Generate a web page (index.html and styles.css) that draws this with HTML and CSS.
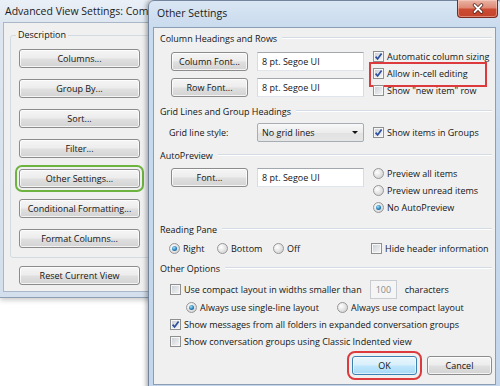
FILE: index.html
```html
<!DOCTYPE html>
<html>
<head>
<meta charset="utf-8">
<title>Other Settings</title>
<link rel="stylesheet" href="styles.css">
</head>
<body>
<div class="win back">
  <div class="btitle"><span class="title-text">Advanced View Settings: Compact</span></div>
  <div class="bclient">
    <div class="group">
      <span class="legend">Description</span>
      <div class="btnstack">
        <button class="btn">Columns...</button>
        <button class="btn">Group By...</button>
        <button class="btn">Sort...</button>
        <button class="btn">Filter...</button>
        <button class="btn hl-green">Other Settings...</button>
        <button class="btn">Conditional Formatting...</button>
        <button class="btn">Format Columns...</button>
      </div>
    </div>
    <button class="btn reset">Reset Current View</button>
  </div>
</div>

<div class="win dialog">
  <div class="dtitle">
    <span class="title-text">Other Settings</span>
    <span class="close"><svg width="14" height="11" viewBox="0 0 14 11"><path d="M3.5 2 L10.5 9 M10.5 2 L3.5 9" stroke="#4a1c14" stroke-width="3.4" stroke-linecap="round"/><path d="M3.5 2 L10.5 9 M10.5 2 L3.5 9" stroke="#fff" stroke-width="1.9" stroke-linecap="round"/></svg></span>
  </div>
  <div class="dclient">
    <div class="head"><span>Column Headings and Rows</span></div>
    <div class="body b-top">
      <div class="left stack">
        <div class="pair"><button class="btn">Column Font...</button><div class="field">8 pt. Segoe UI</div></div>
        <div class="pair"><button class="btn">Row Font...</button><div class="field">8 pt. Segoe UI</div></div>
      </div>
      <div class="right opts">
        <div class="opt"><span class="cb on"><svg viewBox="0 0 9 9"><path d="M1.6 4.6 L3.6 7 L7.6 1.6" stroke="#2c4f9e" stroke-width="1.7" fill="none"/></svg></span><span>Automatic column sizing</span></div>
        <div class="opt mark-red"><span class="cb on"><svg viewBox="0 0 9 9"><path d="M1.6 4.6 L3.6 7 L7.6 1.6" stroke="#2c4f9e" stroke-width="1.7" fill="none"/></svg></span><span>Allow in-cell editing</span></div>
        <div class="opt"><span class="cb"></span><span>Show "new item" row</span></div>
      </div>
    </div>

    <div class="head h2"><span>Grid Lines and Group Headings</span></div>
    <div class="body b-grid">
      <div class="left pair">
        <span class="lbl">Grid line style:</span>
        <div class="select"><span>No grid lines</span><span class="arrow"></span></div>
      </div>
      <div class="right">
        <div class="opt"><span class="cb on"><svg viewBox="0 0 9 9"><path d="M1.6 4.6 L3.6 7 L7.6 1.6" stroke="#2c4f9e" stroke-width="1.7" fill="none"/></svg></span><span>Show items in Groups</span></div>
      </div>
    </div>

    <div class="head h3"><span>AutoPreview</span></div>
    <div class="body b-top b-ap">
      <div class="left stack">
        <div class="pair"><button class="btn">Font...</button><div class="field">8 pt. Segoe UI</div></div>
      </div>
      <div class="right opts">
        <div class="opt"><span class="rb"></span><span>Preview all items</span></div>
        <div class="opt"><span class="rb"></span><span>Preview unread items</span></div>
        <div class="opt"><span class="rb on"></span><span>No AutoPreview</span></div>
      </div>
    </div>

    <div class="head h4"><span>Reading Pane</span></div>
    <div class="body b-rp">
      <div class="left radios">
        <div class="opt w-right"><span class="rb on"></span><span>Right</span></div>
        <div class="opt w-bottom"><span class="rb"></span><span>Bottom</span></div>
        <div class="opt"><span class="rb"></span><span>Off</span></div>
      </div>
      <div class="right">
        <div class="opt"><span class="cb"></span><span>Hide header information</span></div>
      </div>
    </div>

    <div class="head h5"><span>Other Options</span></div>
    <div class="other">
      <div class="opt row-compact"><span class="cb"></span><span>Use compact layout in widths smaller than</span><span class="field small">100</span><span>characters</span></div>
      <div class="row-layout">
        <div class="opt w-single"><span class="rb on"></span><span>Always use single-line layout</span></div>
        <div class="opt"><span class="rb"></span><span>Always use compact layout</span></div>
      </div>
      <div class="opt"><span class="cb on"><svg viewBox="0 0 9 9"><path d="M1.6 4.6 L3.6 7 L7.6 1.6" stroke="#2c4f9e" stroke-width="1.7" fill="none"/></svg></span><span>Show messages from all folders in expanded conversation groups</span></div>
      <div class="opt"><span class="cb"></span><span>Show conversation groups using Classic Indented view</span></div>
    </div>

    <div class="actions">
      <button class="btn dlg default hl-red">OK</button>
      <button class="btn dlg">Cancel</button>
    </div>
  </div>
</div>
</body>
</html>
```

FILE: styles.css
```css
* { box-sizing: border-box; }
html, body { margin: 0; padding: 0; }
body {
  width: 500px;
  height: 386px;
  overflow: hidden;
  position: relative;
  background: #ffffff;
  font-family: "Open Sans", "Noto Sans", sans-serif;
  font-size: 9px;
  color: #141414;
}

.win { position: absolute; display: flex; flex-direction: column; }

/* ---------- background window ---------- */
.back {
  left: 0;
  top: 0;
  width: 190px;
  height: 298px;
  background: linear-gradient(#eaf0f7, #dde6f0 24px, #d3dfec);
  border-bottom: 1px solid #8e9fb4;
  padding: 0 0 5px 3px;
  box-shadow: 0 2px 5px rgba(0, 0, 0, 0.22);
}
.btitle {
  height: 22px;
  width: 145px;
  overflow: hidden;
  display: flex;
  align-items: center;
  padding-left: 2px;
  white-space: nowrap;
}
.title-text { font-size: 10.5px; color: #1b1b1b; }
.bclient {
  flex: 1;
  background: #f0f0f0;
  border: 1px solid #a9b7c8;
  padding: 12px 0 0 6px;
}
.group {
  position: relative;
  width: 150px;
  border: 1px solid #d3dbe2;
  border-radius: 3px;
  padding: 13px 0 9px 8px;
}
.legend {
  position: absolute;
  left: 5px;
  top: -8px;
  padding: 0 2px;
  line-height: 14px;
  background: #f0f0f0;
}
.btnstack { display: flex; flex-direction: column; gap: 11px; }
.btnstack .btn { width: 121px; }
.reset { width: 121px; margin: 8px 0 0 9px; }

/* ---------- buttons ---------- */
.btn {
  font: inherit;
  color: #141414;
  height: 19px;
  padding: 0;
  border: 1px solid #8c8c8c;
  border-radius: 3px;
  background: linear-gradient(#f5f5f5 0%, #ededed 45%, #dfdfdf 55%, #d3d3d3 100%);
  box-shadow: inset 0 0 0 1px rgba(255, 255, 255, 0.75);
  white-space: nowrap;
}
.hl-green { outline: 2px solid #6db33f; outline-offset: 2px; }
.hl-red { outline: 2px solid #dc3a3c; outline-offset: 3px; }
.btn.default {
  border-color: #3c7fb1;
  background: linear-gradient(#eaf6fd 0%, #d9f0fc 45%, #bee6fd 55%, #a7d9f5 100%);
  box-shadow: inset 0 0 0 1px rgba(255, 255, 255, 0.6);
}

/* ---------- dialog ---------- */
.dialog {
  left: 148px;
  top: 0;
  width: 356px;
  height: 392px;
  background: linear-gradient(#dae6f3, #c9dbee 26px, #c3d6eb);
  border: 1px solid #72859c;
  border-radius: 6px 6px 0 0;
  padding: 0 7px 6px 4px;
  box-shadow: -2px 0 4px rgba(0, 0, 0, 0.3);
}
.dtitle {
  height: 26px;
  display: flex;
  align-items: flex-start;
  padding-left: 4px;
}
.dtitle .title-text { line-height: 24px; }
.close {
  margin: -1px -2px 0 auto;
  width: 41px;
  height: 18px;
  border: 1px solid #7b2a1e;
  border-top: none;
  border-radius: 0 0 4px 4px;
  background: linear-gradient(#eab4a6 0%, #df8a76 45%, #cb4b33 55%, #c4432c 100%);
  box-shadow: inset 0 0 0 1px rgba(255, 220, 210, 0.45);
  display: flex;
  align-items: center;
  justify-content: center;
}
.dclient {
  flex: 1;
  background: #f0f0f0;
  border: 1px solid #8d9db2;
  padding: 3px 3px 6px 6px;
}

.head {
  display: flex;
  align-items: center;
  height: 14px;
  gap: 5px;
  white-space: nowrap;
}
.head::after {
  content: "";
  flex: 1;
  border-top: 1px solid #d3dce4;
  border-bottom: 1px solid #ffffff;
}
.h2 { margin-top: 5px; }
.h3 { margin-top: 6px; }
.h4 { margin-top: 6px; }
.h5 { margin-top: 4px; }

.body { display: flex; gap: 9px; padding-left: 11px; }
.left { width: 193px; flex: none; }
.right { flex: 1; }
.stack { display: flex; flex-direction: column; gap: 7px; margin-top: 7px; }
.b-ap .stack { margin-top: 6px; }
.opts { margin-top: 3px; }
.pair { display: grid; grid-template-columns: 77px 107px; column-gap: 9px; align-items: center; }

.b-grid { margin-top: 5px; height: 19px; align-items: center; }
.lbl { margin-left: -2px; }
.b-rp { margin-top: 4px; }
.b-rp .left { margin-left: -2px; }
.radios { display: flex; }
.w-right { width: 48px; flex: none; }
.w-bottom { width: 56px; flex: none; }

.field {
  height: 19px;
  border: 1px solid #abadb3;
  border-color: #a3a7ae #d8dce2 #e0e5eb #d8dce2;
  background: #ffffff;
  padding-left: 4px;
  display: flex;
  align-items: center;
  white-space: nowrap;
}
.field.small {
  width: 27px;
  height: 19px;
  margin: 0 5px 0 5px;
  background: #f5f5f5;
  border: 1px solid #c9cdd2;
  color: #8a8a8a;
  padding-left: 5px;
}
.select {
  height: 19px;
  border: 1px solid #a7adb5;
  border-radius: 2px;
  background: linear-gradient(#f8f8f8, #ececec 50%, #e2e2e2 51%, #e6e6e6);
  display: flex;
  align-items: center;
  justify-content: space-between;
  padding: 0 5px 0 4px;
}
.arrow {
  width: 0;
  height: 0;
  border-left: 3px solid transparent;
  border-right: 3px solid transparent;
  border-top: 3px solid #111;
}

.opt {
  display: flex;
  align-items: center;
  height: 17px;
  gap: 3px;
  white-space: nowrap;
  position: relative;
}
.mark-red::after {
  content: "";
  position: absolute;
  left: -4px;
  top: -3px;
  width: 114px;
  height: 21px;
  border: 2px solid #dc3a3c;
}

.cb {
  width: 11px;
  height: 11px;
  flex: none;
  border: 1px solid #8e8f8f;
  background: linear-gradient(135deg, #c9ced5, #f6f6f6);
  box-shadow: inset 0 0 0 1px #f7f7f7;
  display: flex;
  align-items: center;
  justify-content: center;
}
.cb svg { width: 9px; height: 9px; }

.rb {
  width: 11px;
  height: 11px;
  flex: none;
  border-radius: 50%;
  border: 1px solid #979797;
  background: radial-gradient(circle at 35% 35%, #ffffff, #d4d4d4 80%);
  position: relative;
}
.rb.on::after {
  content: "";
  position: absolute;
  inset: 2px;
  border-radius: 50%;
  background: radial-gradient(circle at 40% 35%, #9fe4f8, #2178b6 60%, #0c4b86);
}

.other { padding-left: 10px; }
.row-compact { height: 19px; margin-top: 5px; }
.row-compact .field.small { margin-left: 5px; }
.row-layout { display: flex; padding-left: 16px; }
.w-single { width: 151px; flex: none; }

.actions {
  display: flex;
  justify-content: flex-end;
  gap: 10px;
  margin-top: 6px;
}
.btn.dlg { width: 65px; }
```
